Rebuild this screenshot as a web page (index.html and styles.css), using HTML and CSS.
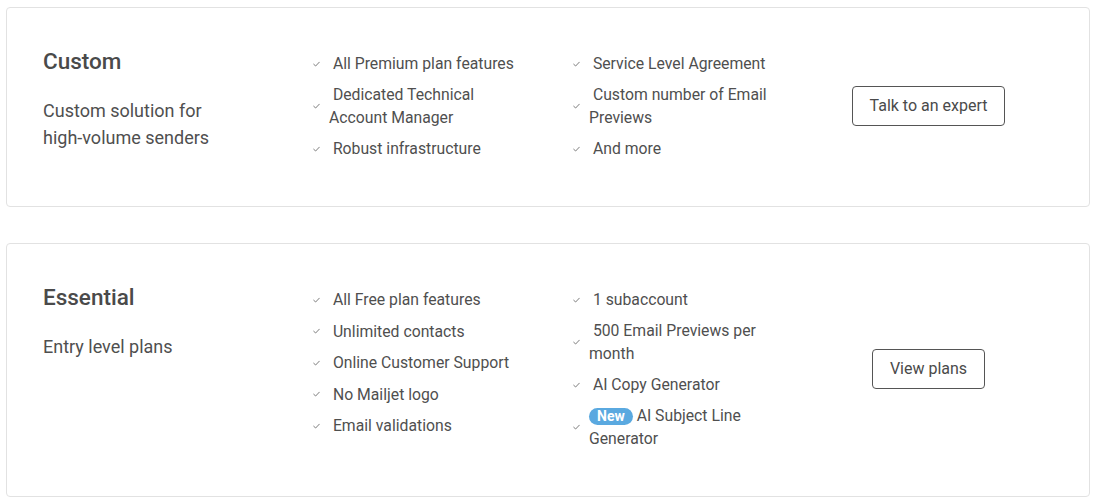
FILE: index.html
```html
<!DOCTYPE html>
<html lang="en">
<head>
<meta charset="utf-8">
<title>Plans</title>
<link rel="stylesheet" href="styles.css">
</head>
<body>
<main class="plans">
  <section class="plan">
    <div class="plan-info">
      <h2 class="plan-title">Custom</h2>
      <p class="plan-desc">Custom solution for<br>high-volume senders</p>
    </div>
    <ul class="features">
      <li><svg class="check" viewBox="0 0 8 6"><polyline points="0.5,3 3,5.3 7.5,0.6"/></svg><span>&nbsp;All Premium plan features</span></li>
      <li><svg class="check" viewBox="0 0 8 6"><polyline points="0.5,3 3,5.3 7.5,0.6"/></svg><span>&nbsp;Dedicated Technical Account Manager</span></li>
      <li><svg class="check" viewBox="0 0 8 6"><polyline points="0.5,3 3,5.3 7.5,0.6"/></svg><span>&nbsp;Robust infrastructure</span></li>
    </ul>
    <ul class="features">
      <li><svg class="check" viewBox="0 0 8 6"><polyline points="0.5,3 3,5.3 7.5,0.6"/></svg><span>&nbsp;Service Level Agreement</span></li>
      <li><svg class="check" viewBox="0 0 8 6"><polyline points="0.5,3 3,5.3 7.5,0.6"/></svg><span>&nbsp;Custom number of Email Previews</span></li>
      <li><svg class="check" viewBox="0 0 8 6"><polyline points="0.5,3 3,5.3 7.5,0.6"/></svg><span>&nbsp;And more</span></li>
    </ul>
    <div class="plan-action">
      <a class="btn" href="#">Talk to an expert</a>
    </div>
  </section>

  <section class="plan">
    <div class="plan-info">
      <h2 class="plan-title">Essential</h2>
      <p class="plan-desc">Entry level plans</p>
    </div>
    <ul class="features features-loose">
      <li><svg class="check" viewBox="0 0 8 6"><polyline points="0.5,3 3,5.3 7.5,0.6"/></svg><span>&nbsp;All Free plan features</span></li>
      <li><svg class="check" viewBox="0 0 8 6"><polyline points="0.5,3 3,5.3 7.5,0.6"/></svg><span>&nbsp;Unlimited contacts</span></li>
      <li><svg class="check" viewBox="0 0 8 6"><polyline points="0.5,3 3,5.3 7.5,0.6"/></svg><span>&nbsp;Online Customer Support</span></li>
      <li><svg class="check" viewBox="0 0 8 6"><polyline points="0.5,3 3,5.3 7.5,0.6"/></svg><span>&nbsp;No Mailjet logo</span></li>
      <li><svg class="check" viewBox="0 0 8 6"><polyline points="0.5,3 3,5.3 7.5,0.6"/></svg><span>&nbsp;Email validations</span></li>
    </ul>
    <ul class="features">
      <li><svg class="check" viewBox="0 0 8 6"><polyline points="0.5,3 3,5.3 7.5,0.6"/></svg><span>&nbsp;1 subaccount</span></li>
      <li><svg class="check" viewBox="0 0 8 6"><polyline points="0.5,3 3,5.3 7.5,0.6"/></svg><span>&nbsp;500 Email Previews per month</span></li>
      <li><svg class="check" viewBox="0 0 8 6"><polyline points="0.5,3 3,5.3 7.5,0.6"/></svg><span>&nbsp;AI Copy Generator</span></li>
      <li><svg class="check" viewBox="0 0 8 6"><polyline points="0.5,3 3,5.3 7.5,0.6"/></svg><span><span class="badge">New</span> AI Subject Line Generator</span></li>
    </ul>
    <div class="plan-action">
      <a class="btn" href="#">View plans</a>
    </div>
  </section>
</main>
</body>
</html>
```

FILE: styles.css
```css
* { box-sizing: border-box; }

html, body {
  margin: 0;
  padding: 0;
  background: #ffffff;
}

body {
  font-family: Roboto, "Liberation Sans", Arial, sans-serif;
  color: #4f4f4f;
}

.plans {
  display: flex;
  flex-direction: column;
  gap: 36px;
  padding: 7px 7px 0 6px;
}

.plan {
  display: grid;
  grid-template-columns: 270px 260px 232px 1fr;
  align-items: start;
  border: 1px solid #e2e2e2;
  border-radius: 4px;
  padding: 44px 37px 46px 36px;
}

.plan-title {
  margin: 0;
  font-size: 22.5px;
  line-height: 18px;
  font-weight: 500;
  color: #4a4a4a;
}

.plan-desc {
  margin: 27px 0 0 0;
  font-size: 18px;
  line-height: 27px;
  color: #4f4f4f;
}

.features {
  list-style: none;
  margin: 0;
  padding: 0;
  display: flex;
  flex-direction: column;
  gap: 8px;
}

.features-loose {
  gap: 8.5px;
}

.features li {
  display: flex;
  align-items: center;
  gap: 9px;
  font-size: 15.75px;
  line-height: 23px;
}

.features li > span {
  max-width: 200px;
}

.check {
  width: 7px;
  height: 6px;
  flex: none;
  fill: none;
  stroke: #777777;
  stroke-width: 1.1;
}

.badge {
  display: inline-block;
  background: #5aa9e0;
  color: #ffffff;
  font-size: 14px;
  font-weight: 700;
  line-height: 17px;
  padding: 0 8px;
  border-radius: 9px;
  vertical-align: 0;
}

.plan-action {
  align-self: center;
  display: flex;
  justify-content: center;
}

.btn {
  display: inline-block;
  border: 1px solid #555555;
  border-radius: 4px;
  padding: 8px 17px;
  font-size: 16px;
  line-height: 22px;
  color: #4a4a4a;
  text-decoration: none;
}
```
